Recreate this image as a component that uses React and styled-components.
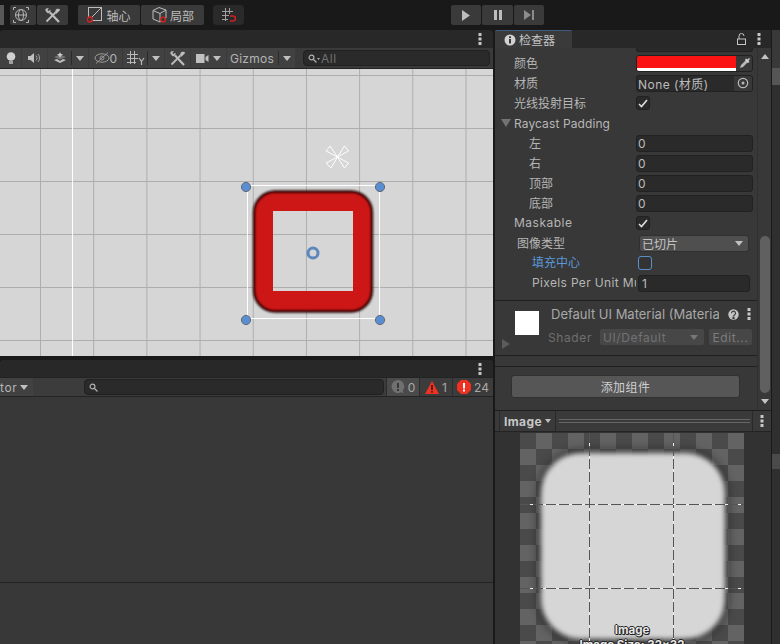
import React from "react";
import styled, { createGlobalStyle } from "styled-components";

const Global = createGlobalStyle`
  html, body { margin: 0; padding: 0; background: #191919; overflow: hidden; }
  * { box-sizing: border-box; }
  body { font-family: Inter, "Noto Sans CJK SC", sans-serif; font-size: 12px; color: #c4c4c4; }
`;

const Page = styled.div`
  width: 780px; height: 644px; display: flex; flex-direction: column; background: #191919; overflow: hidden;
`;
const TopBar = styled.div`
  height: 30px; flex: none; display: flex; align-items: flex-start; padding-top: 5px;
`;
const TopBtn = styled.div`
  width: ${p => p.$w}px; height: 20px; flex: none; margin-left: ${p => p.$ml || 0}px; padding-right: ${p => p.$pr || 0}px;
  display: flex; align-items: center; justify-content: center; gap: 1px;
  background: ${p => p.$bg || "#3a3a3a"}; color: #bdbdbd; border-radius: ${p => p.$r || "2px"}; font-size: 12px;
`;
const Main = styled.div`
  flex: 1; min-height: 0; display: flex;
`;
const LeftCol = styled.div`
  width: 493px; flex: none; display: flex; flex-direction: column;
`;
const TabStrip = styled.div`
  height: ${p => p.$h || 18}px; flex: none; background: #282828; display: flex; align-items: center; justify-content: flex-end;
  padding-right: 11px; border-radius: 3px 3px 0 0; color: #c4c4c4;
`;
const SceneTools = styled.div`
  height: 21px; flex: none; display: flex; align-items: stretch; background: #3a3a3a; border-bottom: 1px solid #232323;
`;
const ToolBtn = styled.div`
  width: ${p => p.$w}px; flex: none; margin-right: ${p => p.$mr ?? 1}px; display: flex; align-items: center;
  justify-content: ${p => p.$start ? "flex-start" : "center"}; padding-left: ${p => p.$pl || 0}px;
  background: ${p => p.$bg || "#414141"}; color: #b4b4b4; font-size: 12px; letter-spacing: ${p => p.$ls || ".25px"};
`;
const DropBit = styled.div`
  margin-left: auto; width: ${p => p.$w || 17}px; height: 100%; display: flex; align-items: center; justify-content: center;
  position: relative;
  &::before { content: ""; position: absolute; left: 0; top: 3px; bottom: 3px; width: 1px; background: #2a2a2a; }
`;
const Caret = styled.span`
  display: inline-block; width: 0; height: 0; flex: none;
  border-left: ${p => p.$s || 4}px solid transparent; border-right: ${p => p.$s || 4}px solid transparent;
  border-top: ${p => (p.$s || 4) + 1}px solid ${p => p.$c || "#c0c0c0"};
  margin-left: ${p => p.$ml || 0}px;
`;
const SearchBox = styled.div`
  height: 16px; display: flex; align-items: center; gap: 1px; flex: none;
  width: ${p => p.$w}px; margin-left: ${p => p.$ml}px; align-self: center; padding-left: 4px;
  background: #2a2a2a; border: 1px solid #202020; border-radius: 4px; color: #707070; font-size: 12px; letter-spacing: .5px;
`;
const Scene = styled.div`
  height: 287px; flex: none; position: relative; overflow: hidden; background-color: #d6d6d6;
  background-image: linear-gradient(to right, #adadad 1px, transparent 1px), linear-gradient(to bottom, #adadad 1px, transparent 1px);
  background-size: 53.2px 53px;
  background-position: 40px 6px;
`;
const AxisLine = styled.div`
  position: absolute; left: 72px; top: 0; bottom: 0; width: 1px; background: #fff;
`;
const GizmoLayer = styled.svg`
  position: absolute; left: 0; top: 0;
`;
const PaneGap = styled.div`
  height: 4px; flex: none; background: #191919;
`;
const ConsoleTools = styled.div`
  height: 20px; flex: none; display: flex; align-items: stretch; background: #3c3c3c;
  border-top: 1px solid #232323; border-bottom: 1px solid #232323;
`;
const Counter = styled.div`
  width: ${p => p.$w}px; flex: none; margin-left: ${p => p.$ml ?? 1}px; display: flex; align-items: center; justify-content: center; gap: 3px;
  background: ${p => p.$on ? "#4a4a4a" : "#3c3c3c"}; color: #a8a8a8; font-size: 12px;
  border-left: 1px solid #2c2c2c;
`;
const ConsoleBody = styled.div`
  flex: 1; background: #383838; display: flex; flex-direction: column;
`;
const ConsoleRule = styled.div`
  height: 1px; margin-top: 185px; background: #232323;
`;
const Inspector = styled.div`
  width: 276px; flex: none; margin-left: 2px; display: flex; flex-direction: column; background: #383838;
`;
const InspectorTabs = styled.div`
  height: 18px; flex: none; display: flex; align-items: stretch; background: #282828;
`;
const Tab = styled.div`
  width: 77px; display: flex; align-items: center; gap: 3px; padding-left: 9px; background: #3a3a3a;
  border-top: 1px solid #3c5d7e; border-radius: 2px 2px 0 0; font-size: 12px; color: #c4c4c4;
`;
const TabActions = styled.div`
  margin-left: auto; display: flex; align-items: center; gap: 11px; padding-right: 10px;
`;
const InspectorBody = styled.div`
  height: 363px; flex: none; display: flex; border-bottom: 1px solid #1f1f1f;
`;
const Content = styled.div`
  width: 262px; flex: none; display: flex; flex-direction: column;
`;
const CutField = styled.div`
  height: 4px; width: 117px; margin: 0 0 1px 141px; flex: none; background: #2a2a2a;
  border: 1px solid #212121; border-top: 0; border-radius: 0 0 3px 3px;
`;
const Row = styled.div`
  height: 20px; flex: none; display: flex; align-items: center;
`;
const Label = styled.div`
  width: 141px; flex: none; padding-left: ${p => p.$pl || 19}px; padding-bottom: ${p => p.$pb ?? 2}px; white-space: nowrap; overflow: hidden;
  color: ${p => p.$blue ? "#5c97d6" : "#b6b6b6"}; font-size: 12px; letter-spacing: ${p => p.$ls || "0"};
  display: flex; align-items: center;
`;
const Foldout = styled.span`
  width: 0; height: 0; margin: 0 3px 0 -13px; flex: none;
  border-left: 5px solid transparent; border-right: 5px solid transparent; border-top: 8px solid #737373;
`;
const Field = styled.div`
  width: ${p => p.$w || 117}px; height: 17px; flex: none; margin-left: ${p => p.$ml || 0}px; display: flex; align-items: center;
  background: #2a2a2a; border: 1px solid #212121; border-radius: 3px; padding: 0 0 0 ${p => p.$pl ?? 1}px;
  color: #bcbcbc; font-size: 12px; letter-spacing: .45px; overflow: hidden;
`;
const Swatch = styled.div`
  width: 99px; height: 100%; flex: none; margin-left: -1px; background: #fb1313; border-bottom: 3px solid #fff;
`;
const FieldIcon = styled.div`
  margin-left: auto; width: 18px; height: 100%; flex: none; display: flex; align-items: center; justify-content: center; background: #383838;
`;
const Check = styled.div`
  width: 14px; height: 14px; flex: none; margin-left: ${p => p.$ml || 0}px; display: flex; align-items: center; justify-content: center;
  background: ${p => p.$blue ? "#333" : "#2a2a2a"}; border: 1px solid ${p => p.$blue ? "#5c8fc8" : "#212121"}; border-radius: 3px;
`;
const Select = styled.div`
  width: 110px; height: 17px; flex: none; margin-left: 3px; display: flex; align-items: center; justify-content: space-between;
  padding: 0 5px 0 2px; background: #4f4f4f; border: 1px solid #303030; border-radius: 3px; color: #c4c4c4; letter-spacing: 0;
`;
const Rule = styled.div`
  height: 1px; flex: none; margin-top: ${p => p.$mt || 0}px; background: #1f1f1f;
`;
const Material = styled.div`
  height: 54px; flex: none; position: relative; display: flex; padding: 10px 0 0 20px;
`;
const MatThumb = styled.div`
  width: 24px; height: 24px; flex: none; background: #fff;
`;
const MatInfo = styled.div`
  margin-left: 9px; width: 209px; display: flex; flex-direction: column;
`;
const MatTitle = styled.div`
  display: flex; align-items: center; height: 16px; margin-left: 3px; margin-top: -5px; color: #a8a8a8; font-size: 13px; letter-spacing: 0;
`;
const MatName = styled.div`
  width: 168px; flex: none; white-space: nowrap; overflow: hidden;
`;
const MatActions = styled.div`
  display: flex; align-items: center; gap: 8px; margin-left: 9px;
`;
const ShaderRow = styled.div`
  display: flex; align-items: center; margin-top: 7px; color: #6f6f6f; letter-spacing: .6px;
`;
const ShaderLabel = styled.div`
  width: 52px; flex: none;
`;
const ShaderSelect = styled.div`
  width: 104px; height: 16px; flex: none; display: flex; align-items: center; justify-content: space-between; padding: 0 6px 0 3px;
  background: #474747; border-radius: 2px; color: #727272;
`;
const EditBtn = styled.div`
  width: 43px; height: 16px; flex: none; margin-left: 5px; display: flex; align-items: center; justify-content: center;
  background: #474747; border-radius: 2px; color: #7c7c7c;
`;
const FoldCorner = styled.span`
  position: absolute; left: 7px; top: 38px; width: 0; height: 0;
  border-top: 5px solid transparent; border-bottom: 5px solid transparent; border-left: 8px solid #5c5c5c;
`;
const AddBtn = styled.div`
  height: 23px; width: 229px; flex: none; margin: 8px 0 0 16px; display: flex; align-items: center; justify-content: center;
  background: #565656; border: 1px solid #303030; border-radius: 3px; color: #d0d0d0; font-size: 12px; letter-spacing: .4px;
`;
const ScrollTrack = styled.div`
  width: 14px; flex: none; display: flex; flex-direction: column; align-items: center; border-left: 1px solid #303030; background: #383838;
`;
const ArrowUp = styled.span`
  width: 0; height: 0; margin-top: 6px; flex: none;
  border-left: 4px solid transparent; border-right: 4px solid transparent; border-bottom: 5px solid #c4c4c4;
`;
const ArrowDown = styled.span`
  width: 0; height: 0; margin: 6px 0; flex: none;
  border-left: 4px solid transparent; border-right: 4px solid transparent; border-top: 5px solid #c4c4c4;
`;
const Thumb = styled.div`
  width: 10px; height: 157px; margin-top: auto; flex: none; background: #606060; border-radius: 5px;
`;
const ImageBar = styled.div`
  height: 21px; flex: none; display: flex; align-items: stretch; background: #3a3a3a; border-bottom: 1px solid #232323;
`;
const ImageTitle = styled.div`
  width: 57px; flex: none; margin-left: 4px; display: flex; align-items: center; gap: 3px; padding-left: 4px;
  border-left: 1px solid #2a2a2a; border-right: 1px solid #2a2a2a; font-weight: 700; color: #c8c8c8; letter-spacing: .4px;
`;
const DoubleLine = styled.div`
  width: 191px; flex: none; margin-left: 3px; align-self: center; height: 4px; border-top: 1px solid #666; border-bottom: 1px solid #666;
`;
const BarMenu = styled.div`
  flex: 1; margin-left: 2px; display: flex; align-items: center; justify-content: center; border-left: 1px solid #2a2a2a;
`;
const Preview = styled.div`
  flex: 1; position: relative; overflow: hidden; background: #323232;
`;
const Checker = styled.div`
  position: absolute; left: 25px; top: 1px; width: 224px; height: 240px;
  background: repeating-conic-gradient(#636363 0 25%, #4a4a4a 0 50%) 0 0 / 32px 32px;
`;
const Sprite = styled.div`
  position: absolute; left: 21px; top: 20px; width: 184px; height: 186px; background: #d6d6d6; border-radius: 40px;
  box-shadow: 0 0 7px 3px rgba(30,30,30,.8); filter: blur(2.5px);
`;
const SliceLines = styled.svg`
  position: absolute; left: 0; top: 0;
`;
const Caption = styled.div`
  position: absolute; left: 0; width: 224px; top: 190px; text-align: center; font-weight: 700; font-size: 11.5px; line-height: 15px; color: #e8e8e8;
  text-shadow: 1px 1px 0 #222, -1px 0 0 #222, 0 -1px 0 #222, 1px 0 0 #222, 0 1px 0 #222;
`;
const RightStrip = styled.div`
  width: 8px; flex: none; margin-left: 1px; display: flex; flex-direction: column; background: #2f2f2f;
`;
const StripBlock = styled.div`
  height: ${p => p.$h}px; margin-top: ${p => p.$mt || 0}px; flex: none; background: ${p => p.$c};
`;

const Dots = () => (
  <svg width="4" height="12" viewBox="0 0 4 12"><g fill="#c8c8c8"><rect x="0.5" y="0" width="3" height="3"/><rect x="0.5" y="4.5" width="3" height="3"/><rect x="0.5" y="9" width="3" height="3"/></g></svg>
);
const Tools = () => (
  <svg width="15" height="15" viewBox="0 0 15 15" fill="none" stroke="#bdbdbd"><path d="M5 4.500l9 9.500" strokeWidth="2.200"/><path d="M10.500 4.500L1.500 13.500" strokeWidth="1.800"/><path d="M.7 2.700C.2 1 1.500-.2 3.500.3L2.300 2l1.200 1.200L5.300 2C5.700 4 4.200 5.500 2.500 5z" fill="#bdbdbd" strokeWidth=".4"/><path d="M11.500 1l3 0v1.500l-3 3-1.500-1.500z" fill="#bdbdbd" strokeWidth=".4"/></svg>
);
const RectTool = () => (
  <svg width="18" height="18" viewBox="3 0 18 18" fill="none"><rect x="4.500" y="1.500" width="13" height="13" stroke="#bdbdbd"/><path d="M6 13L17 2" stroke="#bdbdbd"/><circle cx="5.800" cy="13.500" r="2.500" stroke="#d72222" strokeWidth="1.400" fill="#3a3a3a"/></svg>
);
const CubeTool = () => (
  <svg width="18" height="18" viewBox="0 0 18 18" fill="none" stroke="#bdbdbd"><path d="M2 4.500L8 1.500l7 2.500v8l-6 4-7-3z"/><path d="M2 4.500l7 3 6-3.500M9 7.500V16"/><circle cx="12" cy="13.500" r="2.400" stroke="#d72222" strokeWidth="1.400" fill="#3a3a3a"/></svg>
);
const Transform = () => (
  <svg width="16" height="16" viewBox="0 0 16 16" fill="none" stroke="#b4b4b4"><circle cx="8" cy="8" r="5.500"/><ellipse cx="8" cy="8" rx="2.500" ry="5.500"/><path d="M2.500 8h11M.5 3V.5H3M15.500 3V.5H13M.5 13v2.500H3M15.500 13v2.500H13"/></svg>
);
const SnapIcon = () => (
  <svg width="14" height="15" viewBox="0 0 14 15" fill="none"><path d="M3.500 0v13M7.500 0v6M0 3.500h11M0 7.500h7M0 11.500h6" stroke="#a0a0a0"/><path d="M8 8h3a2.500 2.500 0 0 1 0 5H8" stroke="#d02020" strokeWidth="1.600"/></svg>
);
const Play = () => <svg width="10" height="11" viewBox="0 0 10 11"><path d="M1 0l8 5.500-8 5.500z" fill="#bdbdbd"/></svg>;
const Pause = () => <svg width="10" height="10" viewBox="0 0 10 10"><path d="M1 0h3v10H1zM6 0h3v10H6z" fill="#bdbdbd"/></svg>;
const Step = () => <svg width="11" height="10" viewBox="0 0 11 10"><path d="M0 0l7 5-7 5z M8 0h2v10H8z" fill="#8c8c8c"/></svg>;
const Bulb = () => <svg width="10" height="13" viewBox="0 0 10 13"><circle cx="5" cy="4.500" r="4.300" fill="#d0d0d0"/><rect x="3" y="9" width="4" height="3" fill="#a0a0a0"/></svg>;
const Speaker = () => <svg width="14" height="10" viewBox="0 0 14 10" fill="none"><path d="M0 3h2.500L6 0v10L2.500 7H0z" fill="#c0c0c0"/><path d="M8 2.500a3.500 3.500 0 0 1 0 5M10 1a6 6 0 0 1 0 8" stroke="#a0a0a0"/></svg>;
const Layers = () => <svg width="14" height="12" viewBox="0 0 14 12"><path d="M1 5l6 2.500L13 5l-6-2.500z" fill="#c0c0c0" opacity=".4"/><path d="M1 8l6 3 6-3-3-1-3 2-3-2z" fill="#c0c0c0"/><path d="M7 0l1 2h2L8 4l-1 2-1-2-2-2h2z" fill="#c8c8c8"/></svg>;
const EyeOff = () => <svg width="16" height="12" viewBox="0 0 16 12" fill="none" stroke="#9a9a9a"><ellipse cx="8" cy="6" rx="7" ry="4.200"/><circle cx="8" cy="6" r="2"/><path d="M2 11.500L14 .5"/></svg>;
const GridIcon = () => <svg width="20" height="14" viewBox="0 0 20 14" fill="none" stroke="#b8b8b8"><path d="M3.500 0v13M7.500 0v13M0 3.500h11M0 7.500h11M0 11.500h9"/><path d="M12 7l2.500 3.500v3.500M17 7l-2.500 3.500" strokeWidth="1.200"/></svg>;
const Camera = () => <svg width="13" height="9" viewBox="0 0 13 9"><rect x="0" y="0" width="8.500" height="9" fill="#c0c0c0"/><path d="M9.500 3l3-2v7l-3-2z" fill="#c0c0c0"/></svg>;
const Lens = ({ caret }) => <svg width={caret ? 12 : 9} height="9" viewBox={caret ? "0 0 12 9" : "0 0 9 9"} fill="none" stroke="#b0b0b0" strokeWidth="1.200"><circle cx="3.500" cy="3.500" r="2.400"/><path d="M5.500 5.500L8.500 8.500"/>{caret && <path d="M9 4h3l-1.500 2z" fill="#b0b0b0" stroke="none"/>}</svg>;
const Info = () => <svg width="12" height="12" viewBox="0 0 12 12"><circle cx="6" cy="6" r="5.500" fill="#d2d2d2"/><rect x="5" y="5" width="2" height="4.500" fill="#3a3a3a"/><rect x="5" y="2.300" width="2" height="1.800" fill="#3a3a3a"/></svg>;
const Lock = () => <svg width="9" height="12" viewBox="0 0 9 12" fill="none" stroke="#c4c4c4"><rect x=".5" y="6" width="8" height="5.500"/><path d="M2 6V3a2.500 2.500 0 0 1 5 0"/></svg>;
const Dropper = () => <svg width="12" height="12" viewBox="0 0 12 12"><path d="M1 11l1-3 5-5 2 2-5 5z" fill="#b8b8b8"/><path d="M7 1.500l1.500 1L10 1l1 1-1.500 1.500 1 1.500L9 6 6 3z" fill="#d0d0d0"/></svg>;
const Target = () => <svg width="12" height="12" viewBox="0 0 12 12" fill="none"><circle cx="6" cy="6" r="4.700" stroke="#b8b8b8" strokeWidth="1.200"/><circle cx="6" cy="6" r="1.500" fill="#b8b8b8"/></svg>;
const Tick = () => <svg width="10" height="9" viewBox="0 0 10 9" fill="none"><path d="M1 5l2.500 2.500L9 1" stroke="#e0e0e0" strokeWidth="1.600"/></svg>;
const Help = () => <svg width="11" height="11" viewBox="0 0 11 11"><circle cx="5.500" cy="5.500" r="5.200" fill="#c4c4c4"/><path d="M3.500 4.200a2 2 0 1 1 3 1.700c-.7.400-1 .7-1 1.400M5 8.200h1v1.200H5z" fill="none" stroke="#383838" strokeWidth="1.100"/></svg>;
const Note = () => <svg width="14" height="14" viewBox="0 0 14 14"><path d="M7 0a6.500 6.500 0 1 0 3 12.300l2.500 1-.6-2.900A6.500 6.500 0 0 0 7 0z" fill="#707070"/><rect x="6" y="3" width="2" height="5" fill="#383838"/><rect x="6" y="9" width="2" height="2" fill="#383838"/></svg>;
const Warn = () => <svg width="14" height="13" viewBox="0 0 14 13"><path d="M7 0l7 13H0z" fill="#ee3322"/><rect x="6.200" y="4" width="1.600" height="5" fill="#3a1410"/><rect x="6.200" y="10" width="1.600" height="1.600" fill="#3a1410"/></svg>;
const Err = () => <svg width="14" height="14" viewBox="0 0 14 14"><path d="M4 0h6l4 4v6l-4 4H4l-4-4V4z" fill="#f03020"/><rect x="6" y="3" width="2" height="5.500" fill="#fff"/><rect x="6" y="9.500" width="2" height="2" fill="#fff"/></svg>;

const spriteRing = "M275 191.500h76a21 21 0 0 1 21 21v78a21 21 0 0 1-21 21h-76a21 21 0 0 1-21-21v-78a21 21 0 0 1 21-21z";

const SceneGizmos = () => (
  <GizmoLayer width="493" height="287" viewBox="0 69 493 287">
    <defs><filter id="soft" x="-5%" y="-5%" width="110%" height="110%"><feGaussianBlur stdDeviation="1"/></filter></defs>
    <path fill="#cc0f0f" fillOpacity=".97" fillRule="evenodd" d={`${spriteRing}M273 211v80h80v-80z`} />
    <path fill="none" stroke="#2a0606" strokeWidth="2.400" filter="url(#soft)" d={spriteRing} />
    <rect x="247.500" y="185.500" width="132" height="133" fill="none" stroke="#fff" />
    <g fill="#5a8ed0" stroke="#5e6a78">
      <circle cx="246" cy="187" r="4.600"/><circle cx="380" cy="187" r="4.600"/>
      <circle cx="246" cy="320" r="4.600"/><circle cx="380" cy="320" r="4.600"/>
    </g>
    <circle cx="313" cy="253" r="5" fill="none" stroke="#5c88bd" strokeWidth="3" />
    <g fill="none" stroke="#fff" strokeWidth="1">
      <path d="M337.500 157L326 151l4-5z" /><path d="M337.500 157l11-6-4-5z" />
      <path d="M337.500 157L326 163l5 5z" /><path d="M337.500 157l11 6-4 5z" />
    </g>
  </GizmoLayer>
);

const TopBarView = () => (
  <TopBar>
    <TopBtn $w={4} $bg="#585858" $r="0" />
    <TopBtn $w={26} $ml={6} $pr={4}><Transform /></TopBtn>
    <TopBtn $w={31} $ml={1}><Tools /></TopBtn>
    <TopBtn $w={62} $ml={10}><RectTool />轴心</TopBtn>
    <TopBtn $w={63} $ml={1}><CubeTool />局部</TopBtn>
    <TopBtn $w={31} $ml={9} $bg="#2a2a2a" $r="4px"><SnapIcon /></TopBtn>
    <TopBtn $w={30} $ml={207}><Play /></TopBtn>
    <TopBtn $w={31} $ml={1}><Pause /></TopBtn>
    <TopBtn $w={30} $ml={1}><Step /></TopBtn>
  </TopBar>
);

const SceneToolbar = () => (
  <SceneTools>
    <ToolBtn $w={21}><Bulb /></ToolBtn>
    <ToolBtn $w={25}><Speaker /></ToolBtn>
    <ToolBtn $w={40} $start $pl={5}><Layers /><DropBit><Caret /></DropBit></ToolBtn>
    <ToolBtn $w={33}><EyeOff />0</ToolBtn>
    <ToolBtn $w={41} $start $pl={4}><GridIcon /><DropBit><Caret /></DropBit></ToolBtn>
    <ToolBtn $w={25}><Tools /></ToolBtn>
    <ToolBtn $w={35} $start $pl={5}><Camera /><Caret $ml={4} /></ToolBtn>
    <ToolBtn $w={68} $mr={0} $start $pl={3}>Gizmos<DropBit><Caret /></DropBit></ToolBtn>
    <SearchBox $w={187} $ml={8}><Lens caret />All</SearchBox>
  </SceneTools>
);

const ConsoleToolbar = () => (
  <ConsoleTools>
    <ToolBtn $w={33} $mr={0} $start $ls=".6px">tor<Caret $ml={3} /></ToolBtn>
    <SearchBox $w={300} $ml={51}><Lens /></SearchBox>
    <Counter $w={33} $ml={2} $on><Note />0</Counter>
    <Counter $w={33} $ml={0}><Warn />1</Counter>
    <Counter $w={41} $ml={0}><Err />24</Counter>
  </ConsoleTools>
);

const paddings = [["左", 0], ["右", 0], ["顶部", 0], ["底部", 0]];

const InspectorContent = () => (
  <Content>
    <CutField />
    <Row><Label>颜色</Label><Field><Swatch /><FieldIcon><Dropper /></FieldIcon></Field></Row>
    <Row><Label>材质</Label><Field>None (材质)<FieldIcon><Target /></FieldIcon></Field></Row>
    <Row><Label>光线投射目标</Label><Check><Tick /></Check></Row>
    <Row><Label $pb={0} $ls=".1px"><Foldout />Raycast Padding</Label></Row>
    {paddings.map(([name, value]) => (
      <Row key={name}><Label $pl={34}>{name}</Label><Field>{value}</Field></Row>
    ))}
    <Row><Label $pb={1} $ls=".5px">Maskable</Label><Check><Tick /></Check></Row>
    <Row><Label $pl={22}>图像类型</Label><Select>已切片<Caret /></Select></Row>
    <Row><Label $pl={37} $pb={3} $blue>填充中心</Label><Check $ml={2} $blue /></Row>
    <Row><Label $pl={37} $pb={1} $ls=".35px">Pixels Per Unit Multiplier</Label><Field $w={112} $ml={2} $pl={3}>1</Field></Row>
    <Rule $mt={7} />
    <Material>
      <MatThumb />
      <MatInfo>
        <MatTitle>
          <MatName>Default UI Material (Material)</MatName>
          <MatActions><Help /><Dots /></MatActions>
        </MatTitle>
        <ShaderRow>
          <ShaderLabel>Shader</ShaderLabel>
          <ShaderSelect>UI/Default<Caret $c="#777" /></ShaderSelect>
          <EditBtn>Edit...</EditBtn>
        </ShaderRow>
      </MatInfo>
      <FoldCorner />
    </Material>
    <Rule />
    <Rule $mt={10} />
    <AddBtn>添加组件</AddBtn>
  </Content>
);

const ImagePreview = () => (
  <Preview>
    <Checker>
      <Sprite />
      <SliceLines width="224" height="240" viewBox="0 0 224 240" fill="none">
        <path d="M69.500 0v240M153.500 0v240" stroke="#f0f0f0" />
        <path d="M69.500 0v240M153.500 0v240" stroke="#555" strokeDasharray="10 3" />
        <path d="M0 71.500h224M0 155.500h224" stroke="#f0f0f0" />
        <path d="M0 71.500h224M0 155.500h224" stroke="#555" strokeDasharray="10 3" />
      </SliceLines>
      <Caption>Image<br />Image Size: 32x32</Caption>
    </Checker>
  </Preview>
);

export default function App() {
  return (
    <Page>
      <Global />
      <TopBarView />
      <Main>
        <LeftCol>
          <TabStrip><Dots /></TabStrip>
          <SceneToolbar />
          <Scene><AxisLine /><SceneGizmos /></Scene>
          <PaneGap />
          <TabStrip $h={17}><Dots /></TabStrip>
          <ConsoleToolbar />
          <ConsoleBody><ConsoleRule /></ConsoleBody>
        </LeftCol>
        <Inspector>
          <InspectorTabs>
            <Tab><Info />检查器</Tab>
            <TabActions><Lock /><Dots /></TabActions>
          </InspectorTabs>
          <InspectorBody>
            <InspectorContent />
            <ScrollTrack>
              <ArrowUp />
              <Thumb />
              <ArrowDown />
            </ScrollTrack>
          </InspectorBody>
          <ImageBar>
            <ImageTitle>Image<Caret $s={3} /></ImageTitle>
            <DoubleLine />
            <BarMenu><Dots /></BarMenu>
          </ImageBar>
          <ImagePreview />
        </Inspector>
        <RightStrip>
          <StripBlock $h={38} $c="#393939" />
          <StripBlock $h={17} $c="#555" />
          <StripBlock $h={15} $mt={369} $c="#4a4a4a" />
        </RightStrip>
      </Main>
    </Page>
  );
}
